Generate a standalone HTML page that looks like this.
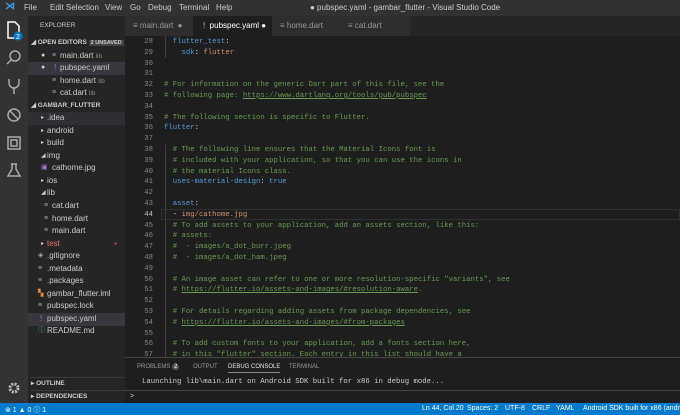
<!DOCTYPE html>
<html><head><meta charset="utf-8"><style>
*{margin:0;padding:0;box-sizing:border-box}
body{width:680px;height:415px;overflow:hidden;background:#1e1e1e;font-family:"Liberation Sans",sans-serif;position:relative}
.a{position:absolute}
#title{left:0;top:0;width:680px;height:16px;background:#323233;color:#ccc;font-size:8px}
#title span{position:absolute;top:3px}
#act{left:0;top:16px;width:28px;height:387px;background:#333}
#side{left:28px;top:16px;width:97px;height:387px;background:#252526;color:#ccc;font-size:8px}
.r{position:absolute;left:0;width:97px;height:12.5px;line-height:12.5px;white-space:nowrap}
.r i{position:absolute;font-style:normal;color:#9aa;font-size:7px}
.r b{position:absolute;font-weight:normal}
.h{font-weight:bold;font-size:6.5px}
.d{color:#888;font-size:6.5px}
#tabs{left:125px;top:16px;width:555px;height:20px;background:#252526;font-size:8px;color:#999}
.t{position:absolute;top:0;height:20px;line-height:20px;background:#2d2d2d;padding-left:8px;white-space:nowrap}
#code{left:125px;top:36px;width:555px;height:321px;font-family:"Liberation Mono",monospace;font-size:7.3px;color:#d4d4d4}
.l{position:absolute;left:0;width:555px;height:10.8px;line-height:10.8px;white-space:pre}
.n{position:absolute;left:0;width:28px;text-align:right;color:#858585}
.c{position:absolute;left:39px}
.k{color:#569cd6}.s{color:#ce9178}.m{color:#6a9955}.u{text-decoration:underline}
#panel{left:125px;top:357px;width:555px;height:46px;background:#1e1e1e;border-top:1px solid #444;font-size:6px;color:#999}
#status{left:0;top:403px;width:680px;height:12px;background:#007acc;color:#fff;font-size:7px}
#status span{position:absolute;top:2px;white-space:nowrap}
</style></head><body>
<div id="title" class="a">
<span style="left:5px;top:1px;color:#3b9de0;font-size:10px;font-weight:bold">⋊</span>
<span style="left:24px">File</span><span style="left:50px">Edit</span><span style="left:66px">Selection</span><span style="left:105px">View</span><span style="left:130px">Go</span><span style="left:148px">Debug</span><span style="left:179px">Terminal</span><span style="left:216px">Help</span>
<span style="left:310px">● pubspec.yaml - gambar_flutter - Visual Studio Code</span>
</div>
<div id="act" class="a">
<svg width="28" height="387" fill="none" stroke="#ddd" stroke-width="1.5">
<path d="M8 6 h7 l4 4 v12 h-11z" stroke="#fff"/>
<circle cx="18" cy="20" r="4.5" fill="#007acc" stroke="none"/>
<text x="16" y="23" font-size="7" fill="#fff" stroke="none" font-family="Liberation Sans">2</text>
<circle cx="15" cy="40" r="5" stroke="#aaa"/><path d="M11 44 l-4 4" stroke="#aaa"/>
<path d="M9 63 v4 a5 5 0 0 0 5 5 a5 5 0 0 0 5 -5 v-4 M14 72 v6" stroke="#aaa"/>
<circle cx="14" cy="99" r="6" stroke="#aaa"/><path d="M10 95 l8 8" stroke="#aaa"/>
<rect x="8" y="121" width="12" height="12" stroke="#aaa"/><rect x="11" y="124" width="6" height="6" stroke="#aaa"/>
<path d="M11 148 h6 M12 148 v5 l-4 7 h12 l-4 -7 v-5" stroke="#aaa"/>
<circle cx="14" cy="372" r="4" stroke="#bbb" stroke-width="3" stroke-dasharray="2 1.2"/>
</svg>
</div>
<div id="side" class="a">
<div class="r" style="top:4px;left:12px;font-size:6.5px">EXPLORER</div>
<div class="r h" style="top:21px;left:3px">◢ OPEN EDITORS <span style="background:#444;padding:0 2px;font-size:5.5px">2 UNSAVED</span></div>
<div class="r" style="top:34px"><i style="left:13px;color:#ccc">●</i><i style="left:24px">≡</i><b style="left:32px">main.dart <span class="d">lib</span></b></div>
<div class="r" style="top:46px;background:#37373d"><i style="left:13px;color:#ccc">●</i><i style="left:26px;color:#a678d8;font-size:8px">!</i><b style="left:32px">pubspec.yaml</b></div>
<div class="r" style="top:59px"><i style="left:24px">≡</i><b style="left:32px">home.dart <span class="d">lib</span></b></div>
<div class="r" style="top:71px"><i style="left:24px">≡</i><b style="left:32px">cat.dart <span class="d">lib</span></b></div>
<div class="r h" style="top:84px;left:3px">◢ GAMBAR_FLUTTER</div>
<div class="r" style="top:96px;background:#2f2f33"><i style="left:13px;color:#ccc;font-size:6px">▸</i><b style="left:19px">.idea</b></div>
<div class="r" style="top:109px"><i style="left:13px;color:#ccc;font-size:6px">▸</i><b style="left:19px">android</b></div>
<div class="r" style="top:121px"><i style="left:13px;color:#ccc;font-size:6px">▸</i><b style="left:19px">build</b></div>
<div class="r" style="top:134px"><i style="left:13px;color:#ccc;font-size:6px">◢</i><b style="left:19px">img</b></div>
<div class="r" style="top:146px"><i style="left:13px;color:#a07cd0">▣</i><b style="left:24px">cathome.jpg</b></div>
<div class="r" style="top:159px"><i style="left:13px;color:#ccc;font-size:6px">▸</i><b style="left:19px">ios</b></div>
<div class="r" style="top:171px"><i style="left:13px;color:#ccc;font-size:6px">◢</i><b style="left:19px">lib</b></div>
<div class="r" style="top:184px"><i style="left:16px">≡</i><b style="left:24px">cat.dart</b></div>
<div class="r" style="top:197px"><i style="left:16px">≡</i><b style="left:24px">home.dart</b></div>
<div class="r" style="top:209px"><i style="left:16px">≡</i><b style="left:24px">main.dart</b></div>
<div class="r" style="top:222px;color:#e57373"><i style="left:13px;color:#ccc;font-size:6px">▸</i><b style="left:19px">test</b><i style="left:86px;color:#a55;font-size:5px">●</i></div>
<div class="r" style="top:234px"><i style="left:10px">◈</i><b style="left:19px">.gitignore</b></div>
<div class="r" style="top:247px"><i style="left:10px">≡</i><b style="left:19px">.metadata</b></div>
<div class="r" style="top:259px"><i style="left:10px">≡</i><b style="left:19px">.packages</b></div>
<div class="r" style="top:272px"><i style="left:10px;color:#e08a3c">▚</i><b style="left:19px">gambar_flutter.iml</b></div>
<div class="r" style="top:284px"><i style="left:10px">≡</i><b style="left:19px">pubspec.lock</b></div>
<div class="r" style="top:297px;background:#37373d"><i style="left:12px;color:#a678d8;font-size:8px">!</i><b style="left:19px">pubspec.yaml</b></div>
<div class="r" style="top:309px"><i style="left:10px;color:#6ab">ⓘ</i><b style="left:19px">README.md</b></div>
<div class="r h" style="top:361px;left:3px;border-top:1px solid #3a3a3a">▸ OUTLINE</div>
<div class="r h" style="top:374px;left:3px;border-top:1px solid #3a3a3a">▸ DEPENDENCIES</div>
</div>
<div id="tabs" class="a">
<div class="t" style="left:0;width:68px">≡ main.dart &nbsp;●</div>
<div class="t" style="left:68px;width:79px;background:#1e1e1e;color:#fff;padding-left:10px"><span style="color:#e2c08d">!</span>&nbsp; pubspec.yaml ●</div>
<div class="t" style="left:147px;width:68px">≡ home.dart</div>
<div class="t" style="left:215px;width:70px">≡ cat.dart</div>
</div>
<div id="code" class="a">
<div class="a" style="left:40px;top:0;width:1px;height:22px;background:#404040"></div>
<div class="a" style="left:40px;top:109px;width:1px;height:212px;background:#404040"></div>
<div class="a" style="left:36px;top:173px;width:519px;height:11px;border:1px solid #303030"></div>
<div class="l" style="top:1px"><span class="n">28</span><span class="c">  <span class="k">flutter_test</span>:</span></div>
<div class="l" style="top:11.8px"><span class="n">29</span><span class="c">    <span class="k">sdk</span>: <span class="s">flutter</span></span></div>
<div class="l" style="top:22.6px"><span class="n">30</span></div>
<div class="l" style="top:33.4px"><span class="n">31</span></div>
<div class="l" style="top:44.2px"><span class="n">32</span><span class="c m"># For information on the generic Dart part of this file, see the</span></div>
<div class="l" style="top:55px"><span class="n">33</span><span class="c m"># following page: <span class="u">https://www.dartlang.org/tools/pub/pubspec</span></span></div>
<div class="l" style="top:65.8px"><span class="n">34</span></div>
<div class="l" style="top:76.6px"><span class="n">35</span><span class="c m"># The following section is specific to Flutter.</span></div>
<div class="l" style="top:87.4px"><span class="n">36</span><span class="c"><span class="k">flutter</span>:</span></div>
<div class="l" style="top:98.2px"><span class="n">37</span></div>
<div class="l" style="top:109px"><span class="n">38</span><span class="c m">  # The following line ensures that the Material Icons font is</span></div>
<div class="l" style="top:119.8px"><span class="n">39</span><span class="c m">  # included with your application, so that you can use the icons in</span></div>
<div class="l" style="top:130.6px"><span class="n">40</span><span class="c m">  # the material Icons class.</span></div>
<div class="l" style="top:141.4px"><span class="n">41</span><span class="c">  <span class="k">uses-material-design</span>: <span class="k">true</span></span></div>
<div class="l" style="top:152.2px"><span class="n">42</span></div>
<div class="l" style="top:163px"><span class="n">43</span><span class="c">  <span class="k">asset</span>:</span></div>
<div class="l" style="top:173.8px"><span class="n" style="color:#c6c6c6">44</span><span class="c">  - <span class="s">img/cathome.jpg</span></span></div>
<div class="l" style="top:184.6px"><span class="n">45</span><span class="c m">  # To add assets to your application, add an assets section, like this:</span></div>
<div class="l" style="top:195.4px"><span class="n">46</span><span class="c m">  # assets:</span></div>
<div class="l" style="top:206.2px"><span class="n">47</span><span class="c m">  #  - images/a_dot_burr.jpeg</span></div>
<div class="l" style="top:217px"><span class="n">48</span><span class="c m">  #  - images/a_dot_ham.jpeg</span></div>
<div class="l" style="top:227.8px"><span class="n">49</span></div>
<div class="l" style="top:238.6px"><span class="n">50</span><span class="c m">  # An image asset can refer to one or more resolution-specific "variants", see</span></div>
<div class="l" style="top:249.4px"><span class="n">51</span><span class="c m">  # <span class="u">https://flutter.io/assets-and-images/#resolution-aware</span>.</span></div>
<div class="l" style="top:260.2px"><span class="n">52</span></div>
<div class="l" style="top:271px"><span class="n">53</span><span class="c m">  # For details regarding adding assets from package dependencies, see</span></div>
<div class="l" style="top:281.8px"><span class="n">54</span><span class="c m">  # <span class="u">https://flutter.io/assets-and-images/#from-packages</span></span></div>
<div class="l" style="top:292.6px"><span class="n">55</span></div>
<div class="l" style="top:303.4px"><span class="n">56</span><span class="c m">  # To add custom fonts to your application, add a fonts section here,</span></div>
<div class="l" style="top:314.2px"><span class="n">57</span><span class="c m">  # in this "flutter" section. Each entry in this list should have a</span></div>
</div>
<div id="panel" class="a">
<span class="a" style="left:12px;top:6px">PROBLEMS <span style="background:#555;color:#fff;border-radius:5px;padding:0 2px">2</span></span>
<span class="a" style="left:68px;top:6px">OUTPUT</span>
<span class="a" style="left:103px;top:6px;color:#e7e7e7;border-bottom:1px solid #888;padding-bottom:2px">DEBUG CONSOLE</span>
<span class="a" style="left:164px;top:6px">TERMINAL</span>
<span class="a" style="left:17px;top:20px;font-family:'Liberation Mono',monospace;font-size:7.3px;color:#ccc;white-space:pre">Launching lib\main.dart on Android SDK built for x86 in debug mode...</span>
<div class="a" style="left:0;top:32px;width:555px;height:1px;background:#444"></div>
<span class="a" style="left:5px;top:35px;color:#ccc;font-size:7px">&gt;</span>
</div>
<div id="status" class="a">
<span style="left:5px">⊗ 1 ▲ 0 ⓘ 1</span>
<span style="left:422px">Ln 44, Col 20</span><span style="left:467px">Spaces: 2</span><span style="left:505px">UTF-8</span><span style="left:532px">CRLF</span><span style="left:556px">YAML</span><span style="left:583px">Android SDK built for x86 (android</span>
</div>
</body></html>
